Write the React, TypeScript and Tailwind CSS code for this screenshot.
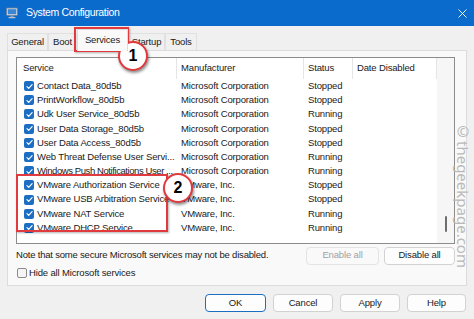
import React from "react";

type Row = { name: string; maker: string; status: string; tight?: boolean };

const rows: Row[] = [
  { name: "Contact Data_80d5b", maker: "Microsoft Corporation", status: "Stopped" },
  { name: "PrintWorkflow_80d5b", maker: "Microsoft Corporation", status: "Stopped" },
  { name: "Udk User Service_80d5b", maker: "Microsoft Corporation", status: "Running" },
  { name: "User Data Storage_80d5b", maker: "Microsoft Corporation", status: "Stopped" },
  { name: "User Data Access_80d5b", maker: "Microsoft Corporation", status: "Stopped" },
  { name: "Web Threat Defense User Servi...", maker: "Microsoft Corporation", status: "Running" },
  { name: "Windows Push Notifications User ...", maker: "Microsoft Corporation", status: "Running", tight: true },
  { name: "VMware Authorization Service", maker: "VMware, Inc.", status: "Stopped" },
  { name: "VMware USB Arbitration Service", maker: "VMware, Inc.", status: "Stopped" },
  { name: "VMware NAT Service", maker: "VMware, Inc.", status: "Running" },
  { name: "VMware DHCP Service", maker: "VMware, Inc.", status: "Running" },
];

function CheckBox() {
  return (
    <span className="w-[10px] h-[10px] rounded-[2px] bg-[#1b6ec2] flex items-center justify-center shrink-0">
      <svg viewBox="0 0 10 10" className="w-[9px] h-[9px]">
        <path d="M2.2 5.2 L4.1 7 L7.9 2.9" fill="none" stroke="white" strokeWidth="1.3" strokeLinecap="round" strokeLinejoin="round" />
      </svg>
    </span>
  );
}

function Tab({ label, active, w }: { label: string; active?: boolean; w: string }) {
  return (
    <div
      className={
        active
          ? `${w} h-[22px] bg-[#f9f9f9] border border-b-0 border-[#dcdcdc] flex items-center justify-center -mb-px relative z-10`
          : `${w} h-[17px] bg-[#f0f0f0] border border-b-0 border-[#e0e0e0] flex items-center justify-center`
      }
    >
      {label}
    </div>
  );
}

function Btn({ label, className = "" }: { label: string; className?: string }) {
  return (
    <div className={`h-[18px] rounded-[4px] border flex items-center justify-center ${className}`}>{label}</div>
  );
}

function Badge({ n, className }: { n: string; className: string }) {
  return (
    <div
      className={`absolute w-[30px] h-[30px] rounded-full bg-white border-2 border-[#e0393e] shadow-[1px_2px_3px_rgba(0,0,0,0.45)] flex items-center justify-center text-[16px] font-bold text-black tracking-normal ${className}`}
    >
      {n}
    </div>
  );
}

export default function App() {
  return (
    <div className="relative w-[474px] h-[319px] overflow-hidden bg-[#f0f0f0] text-[9.5px] tracking-[-0.15px] text-[#1a1a1a] font-['Liberation_Sans',sans-serif]">
      {/* Title bar */}
      <div className="h-[26px] bg-[#0b6bcd] flex items-center pl-[6px] pr-[7px] text-white">
        <svg viewBox="0 0 12 12" className="w-[12px] h-[12px] mr-[8px]">
          <rect x="0.5" y="1" width="11" height="7.5" rx="0.8" fill="#cfd8e3" stroke="#6b7d90" strokeWidth="0.8" />
          <rect x="1.8" y="2.2" width="8.4" height="5" fill="#3a86d4" />
          <rect x="4.5" y="8.5" width="3" height="1.6" fill="#8a9bb0" />
          <rect x="2.5" y="10" width="7" height="1.3" rx="0.4" fill="#b7c3d1" />
        </svg>
        <span className="text-[10.5px] tracking-[-0.35px]">System Configuration</span>
        <svg viewBox="0 0 10 10" className="ml-auto w-[9px] h-[9px]">
          <path d="M0.5 0.5 L9.5 9.5 M9.5 0.5 L0.5 9.5" stroke="white" strokeWidth="1" />
        </svg>
      </div>

      {/* Body */}
      <div className="px-[7px]">
        <div className="h-[24px] flex items-end">
          <Tab label="General" w="w-[41px]" />
          <Tab label="Boot" w="w-[29px]" />
          <Tab label="Services" w="w-[51px]" active />
          <Tab label="Startup" w="w-[37px]" />
          <Tab label="Tools" w="w-[32px]" />
        </div>

        <div className="h-[236px] bg-[#f9f9f9] border border-[#dcdcdc] pt-[6px] pl-[8px] pr-[11px]">
          {/* List box */}
          <div className="h-[187px] bg-white border border-[#8c8c8c] flex">
            <div className="flex-1 flex flex-col">
              <div className="h-[21px] flex items-center shrink-0">
                <div className="w-[160px] pl-[6px] h-full flex items-center border-r border-[#e5e5e5]">Service</div>
                <div className="w-[127px] pl-[4px] h-full flex items-center border-r border-[#e5e5e5]">Manufacturer</div>
                <div className="w-[49px] pl-[4px] h-full flex items-center border-r border-[#e5e5e5]">Status</div>
                <div className="flex-1 pl-[4px] h-full flex items-center border-r border-[#e5e5e5]">Date Disabled</div>
              </div>
              {rows.map((r) => (
                <div key={r.name} className="h-[14.2px] flex items-center shrink-0">
                  <div className="w-[160px] pl-[7px] flex items-center gap-[3px] overflow-hidden whitespace-nowrap">
                    <CheckBox />
                    <span className={r.tight ? "tracking-[-0.42px]" : ""}>{r.name}</span>
                  </div>
                  <div className="w-[127px] pl-[4px] whitespace-nowrap overflow-hidden">{r.maker}</div>
                  <div className="w-[49px] pl-[4px] whitespace-nowrap">{r.status}</div>
                </div>
              ))}
            </div>
            {/* Scrollbar */}
            <div className="w-[17px] bg-[#f6f6f6] flex flex-col items-center justify-end pb-[11px]">
              <div className="w-[2px] h-[16px] rounded-full bg-[#6e6e6e]" />
            </div>
          </div>

          <div className="flex items-center mt-[2px] h-[19px] whitespace-nowrap">
            <span className="tracking-[-0.2px]">Note that some secure Microsoft services may not be disabled.</span>
            <div className="ml-auto flex gap-[5px]">
              <Btn label="Enable all" className="w-[73px] bg-[#f9f9f9] border-[#e3e3e3] text-[#a2a2a2]" />
              <Btn label="Disable all" className="w-[71px] bg-[#fdfdfd] border-[#d2d2d2]" />
            </div>
          </div>

          <div className="flex items-center mt-[1px] pl-[1px] gap-[2px]">
            <span className="w-[10px] h-[10px] rounded-[2px] border border-[#8a8a8a] bg-[#f5f5f5]" />
            <span>Hide all Microsoft services</span>
          </div>
        </div>
      </div>

      {/* Bottom buttons */}
      <div className="flex justify-end gap-[7px] pr-[8px] mt-[8px]">
        <Btn label="OK" className="w-[61px] bg-[#fdfdfd] border-[#1b6ec2]" />
        <Btn label="Cancel" className="w-[60px] bg-[#fdfdfd] border-[#d2d2d2]" />
        <Btn label="Apply" className="w-[60px] bg-[#fdfdfd] border-[#d2d2d2]" />
        <Btn label="Help" className="w-[59px] bg-[#fdfdfd] border-[#d2d2d2]" />
      </div>

      {/* Watermark */}
      <div className="absolute left-[455px] top-[121px] text-[15px] tracking-normal text-[#b9b9b9] [writing-mode:vertical-rl] whitespace-nowrap leading-none font-['Noto_Sans',sans-serif]">
        ©thegeekpage.com
      </div>

      {/* Annotations */}
      <div className="absolute left-[74px] top-[27px] w-[55px] h-[25px] border-2 border-[#e0393e] shadow-[1px_1px_2px_rgba(0,0,0,0.3)]" />
      <Badge n="1" className="left-[118px] top-[41px]" />
      <div className="absolute left-[16px] top-[174px] w-[152px] h-[58px] border-2 border-[#e0393e] shadow-[1px_1px_2px_rgba(0,0,0,0.3)]" />
      <Badge n="2" className="left-[163px] top-[173px]" />
    </div>
  );
}
